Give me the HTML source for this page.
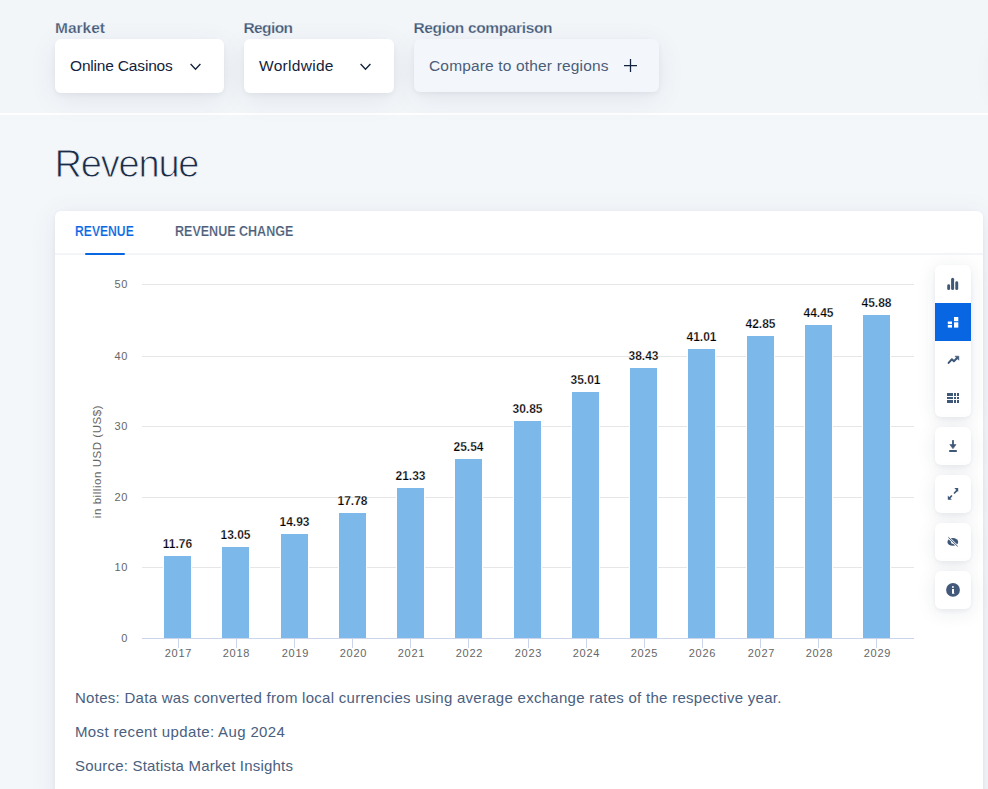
<!DOCTYPE html>
<html><head><meta charset="utf-8">
<style>
*{margin:0;padding:0;box-sizing:border-box}
html,body{width:988px;height:789px;overflow:hidden}
body{background:#f4f7fa;font-family:"Liberation Sans",sans-serif;position:relative}
.abs{position:absolute;white-space:nowrap}
.top{position:absolute;left:0;top:0;width:988px;height:113px;background:#f3f6f9}
.sep{position:absolute;left:0;top:113px;width:988px;height:2px;background:#ffffff}
.lbl{position:absolute;font-size:15.5px;font-weight:bold;color:#445a78;top:18.8px;white-space:nowrap;-webkit-text-stroke:0.25px #f3f6f9}
.dd{position:absolute;top:39px;height:54px;background:#fff;border-radius:6px;box-shadow:0 2px 5px rgba(20,40,80,.05),0 6px 28px rgba(20,40,80,.08)}
.dd span{position:absolute;left:15px;top:17.6px;font-size:15.5px;color:#13233b;white-space:nowrap}
.title{position:absolute;left:54.6px;top:142.8px;letter-spacing:-1.2px;font-size:38px;color:#1a2c47;font-weight:normal;-webkit-text-stroke:0.9px #f4f7fa}
.card{position:absolute;left:55px;top:211px;width:928px;height:600px;background:#fff;border-radius:6px;box-shadow:0 1px 4px rgba(20,40,80,.05),0 4px 28px rgba(20,40,80,.08)}
.tab{position:absolute;top:222px;font-size:15px;font-weight:bold;white-space:nowrap;transform-origin:0 0;-webkit-text-stroke:0.2px #ffffff}
.note{position:absolute;left:75px;font-size:15px;color:#4a607e;white-space:nowrap}
.tb{position:absolute;left:935px;width:36px;background:#fff;border-radius:6px;box-shadow:0 2px 4px rgba(20,40,80,.05),0 3px 20px rgba(20,40,80,.09)}
svg text{font-family:"Liberation Sans",sans-serif}
.yl{font-size:11px;fill:#666666;letter-spacing:0.6px}
.xl{font-size:11px;fill:#666666;letter-spacing:0.75px}
.dl{font-size:12px;font-weight:bold;fill:#000000;stroke:#ffffff;stroke-width:0.25px}
.yt{font-size:11.5px;fill:#666666;letter-spacing:0.55px}
</style></head><body>
<div class="top"></div>
<div class="sep"></div>

<div class="lbl" style="left:55px">Market</div>
<div class="lbl" style="left:243.5px;letter-spacing:-0.6px">Region</div>
<div class="lbl" style="left:413.5px;letter-spacing:-0.35px">Region comparison</div>

<div class="dd" style="left:55px;width:169px"><span style="letter-spacing:-0.18px">Online Casinos</span></div>
<svg class="abs" style="left:189px;top:62px" width="14" height="10" viewBox="0 0 14 10"><path d="M1.6 2 L6.5 7.2 L11.4 2" fill="none" stroke="#13233b" stroke-width="1.35"/></svg>
<div class="dd" style="left:244px;width:150px"><span style="letter-spacing:0.3px">Worldwide</span></div>
<svg class="abs" style="left:359px;top:62px" width="14" height="10" viewBox="0 0 14 10"><path d="M1.6 2 L6.5 7.2 L11.4 2" fill="none" stroke="#13233b" stroke-width="1.35"/></svg>
<div class="dd" style="left:414px;width:245px;height:53px;background:#f3f6fa"><span style="color:#4a5d79;letter-spacing:0.16px">Compare to other regions</span></div>
<svg class="abs" style="left:623px;top:58px" width="15" height="15" viewBox="0 0 15 15"><path d="M7.5 1 V14 M1 7.5 H14" fill="none" stroke="#13233b" stroke-width="1.25"/></svg>

<div class="dd" style="left:1000px;width:150px;height:53px;background:#f3f6fa"></div>
<div class="title">Revenue</div>

<div class="card"></div>
<div class="tab" style="left:75px;color:#0866e3;transform:scaleX(0.81)">REVENUE</div>
<div class="tab" style="left:175px;color:#4b5e79;transform:scaleX(0.835)">REVENUE CHANGE</div>
<div class="abs" style="left:55px;top:253px;width:928px;height:2px;background:#f3f5f8"></div>
<div class="abs" style="left:85px;top:253px;width:40px;height:2px;background:#0866e3;border-radius:1px"></div>

<svg class="abs" style="left:0;top:0" width="988" height="789">
<line x1="142" x2="914" y1="567.5" y2="567.5" stroke="#e6e6e6" stroke-width="1"/>
<line x1="142" x2="914" y1="497.5" y2="497.5" stroke="#e6e6e6" stroke-width="1"/>
<line x1="142" x2="914" y1="426.5" y2="426.5" stroke="#e6e6e6" stroke-width="1"/>
<line x1="142" x2="914" y1="356.5" y2="356.5" stroke="#e6e6e6" stroke-width="1"/>
<line x1="142" x2="914" y1="284.5" y2="284.5" stroke="#e6e6e6" stroke-width="1"/>
<text x="127.9" y="641.6" text-anchor="end" class="yl">0</text>
<text x="127.9" y="570.6" text-anchor="end" class="yl">10</text>
<text x="127.9" y="500.6" text-anchor="end" class="yl">20</text>
<text x="127.9" y="429.6" text-anchor="end" class="yl">30</text>
<text x="127.9" y="359.6" text-anchor="end" class="yl">40</text>
<text x="127.9" y="287.6" text-anchor="end" class="yl">50</text>
<rect x="163" y="555" width="29" height="83" fill="#ffffff"/>
<rect x="164" y="556" width="27" height="82" fill="#7cb8e9"/>
<text x="177.50" y="548.00" text-anchor="middle" class="dl">11.76</text>
<line x1="178.5" x2="178.5" y1="638" y2="648" stroke="#ccd6eb" stroke-width="1"/>
<text x="178.40" y="657" text-anchor="middle" class="xl">2017</text>
<rect x="221" y="546" width="29" height="92" fill="#ffffff"/>
<rect x="222" y="547" width="27" height="91" fill="#7cb8e9"/>
<text x="235.50" y="539.00" text-anchor="middle" class="dl">13.05</text>
<line x1="236.5" x2="236.5" y1="638" y2="648" stroke="#ccd6eb" stroke-width="1"/>
<text x="236.40" y="657" text-anchor="middle" class="xl">2018</text>
<rect x="280" y="533" width="29" height="105" fill="#ffffff"/>
<rect x="281" y="534" width="27" height="104" fill="#7cb8e9"/>
<text x="294.50" y="526.00" text-anchor="middle" class="dl">14.93</text>
<line x1="294.5" x2="294.5" y1="638" y2="648" stroke="#ccd6eb" stroke-width="1"/>
<text x="295.40" y="657" text-anchor="middle" class="xl">2019</text>
<rect x="338" y="512" width="29" height="126" fill="#ffffff"/>
<rect x="339" y="513" width="27" height="125" fill="#7cb8e9"/>
<text x="352.50" y="505.00" text-anchor="middle" class="dl">17.78</text>
<line x1="352.5" x2="352.5" y1="638" y2="648" stroke="#ccd6eb" stroke-width="1"/>
<text x="353.40" y="657" text-anchor="middle" class="xl">2020</text>
<rect x="396" y="487" width="29" height="151" fill="#ffffff"/>
<rect x="397" y="488" width="27" height="150" fill="#7cb8e9"/>
<text x="410.50" y="480.00" text-anchor="middle" class="dl">21.33</text>
<line x1="410.5" x2="410.5" y1="638" y2="648" stroke="#ccd6eb" stroke-width="1"/>
<text x="411.40" y="657" text-anchor="middle" class="xl">2021</text>
<rect x="454" y="458" width="29" height="180" fill="#ffffff"/>
<rect x="455" y="459" width="27" height="179" fill="#7cb8e9"/>
<text x="468.50" y="451.00" text-anchor="middle" class="dl">25.54</text>
<line x1="468.5" x2="468.5" y1="638" y2="648" stroke="#ccd6eb" stroke-width="1"/>
<text x="469.40" y="657" text-anchor="middle" class="xl">2022</text>
<rect x="513" y="420" width="29" height="218" fill="#ffffff"/>
<rect x="514" y="421" width="27" height="217" fill="#7cb8e9"/>
<text x="527.50" y="413.00" text-anchor="middle" class="dl">30.85</text>
<line x1="528.5" x2="528.5" y1="638" y2="648" stroke="#ccd6eb" stroke-width="1"/>
<text x="528.40" y="657" text-anchor="middle" class="xl">2023</text>
<rect x="571" y="391" width="29" height="247" fill="#ffffff"/>
<rect x="572" y="392" width="27" height="246" fill="#7cb8e9"/>
<text x="585.50" y="384.00" text-anchor="middle" class="dl">35.01</text>
<line x1="586.5" x2="586.5" y1="638" y2="648" stroke="#ccd6eb" stroke-width="1"/>
<text x="586.40" y="657" text-anchor="middle" class="xl">2024</text>
<rect x="629" y="367" width="29" height="271" fill="#ffffff"/>
<rect x="630" y="368" width="27" height="270" fill="#7cb8e9"/>
<text x="643.50" y="360.00" text-anchor="middle" class="dl">38.43</text>
<line x1="644.5" x2="644.5" y1="638" y2="648" stroke="#ccd6eb" stroke-width="1"/>
<text x="644.40" y="657" text-anchor="middle" class="xl">2025</text>
<rect x="687" y="348" width="29" height="290" fill="#ffffff"/>
<rect x="688" y="349" width="27" height="289" fill="#7cb8e9"/>
<text x="701.50" y="341.00" text-anchor="middle" class="dl">41.01</text>
<line x1="702.5" x2="702.5" y1="638" y2="648" stroke="#ccd6eb" stroke-width="1"/>
<text x="702.40" y="657" text-anchor="middle" class="xl">2026</text>
<rect x="746" y="335" width="29" height="303" fill="#ffffff"/>
<rect x="747" y="336" width="27" height="302" fill="#7cb8e9"/>
<text x="760.50" y="328.00" text-anchor="middle" class="dl">42.85</text>
<line x1="760.5" x2="760.5" y1="638" y2="648" stroke="#ccd6eb" stroke-width="1"/>
<text x="761.40" y="657" text-anchor="middle" class="xl">2027</text>
<rect x="804" y="324" width="29" height="314" fill="#ffffff"/>
<rect x="805" y="325" width="27" height="313" fill="#7cb8e9"/>
<text x="818.50" y="317.00" text-anchor="middle" class="dl">44.45</text>
<line x1="818.5" x2="818.5" y1="638" y2="648" stroke="#ccd6eb" stroke-width="1"/>
<text x="819.40" y="657" text-anchor="middle" class="xl">2028</text>
<rect x="862" y="314" width="29" height="324" fill="#ffffff"/>
<rect x="863" y="315" width="27" height="323" fill="#7cb8e9"/>
<text x="876.50" y="307.00" text-anchor="middle" class="dl">45.88</text>
<line x1="876.5" x2="876.5" y1="638" y2="648" stroke="#ccd6eb" stroke-width="1"/>
<text x="877.40" y="657" text-anchor="middle" class="xl">2029</text>
<line x1="142" x2="914" y1="638.5" y2="638.5" stroke="#ccd6eb" stroke-width="1"/>
<text transform="translate(101,461.5) rotate(-90)" text-anchor="middle" class="yt">in billion USD (US$)</text>
</svg>

<div class="note" style="top:689px;letter-spacing:0.28px">Notes: Data was converted from local currencies using average exchange rates of the respective year.</div>
<div class="note" style="top:723px;letter-spacing:0.36px">Most recent update: Aug 2024</div>
<div class="note" style="top:756.5px;letter-spacing:0.2px">Source: Statista Market Insights</div>

<div class="tb" style="top:265px;height:152px"></div>
<div class="abs" style="left:935px;top:303px;width:36px;height:38px;background:#0866e3"></div>
<div class="tb" style="top:427px;height:38px"></div>
<div class="tb" style="top:475px;height:38px"></div>
<div class="tb" style="top:523px;height:38px"></div>
<div class="tb" style="top:571px;height:38px"></div>

<svg class="abs" style="left:935px;top:265px" width="36" height="38" viewBox="0 0 36 38">
 <g fill="#3f5878"><rect x="12.2" y="19.2" width="2.9" height="5.9" rx="1.45"/><rect x="16.1" y="12.8" width="3" height="12.3" rx="1.5"/><rect x="20.3" y="16.2" width="2.9" height="8.9" rx="1.45"/></g>
</svg>
<svg class="abs" style="left:935px;top:303px" width="36" height="38" viewBox="0 0 36 38">
 <g fill="#ffffff"><rect x="19" y="14" width="4.3" height="4.2"/><rect x="19" y="19.3" width="4.3" height="5.3"/><rect x="12.8" y="18.5" width="4.2" height="2.6"/><rect x="12.8" y="22" width="4.2" height="2.6"/></g>
</svg>
<svg class="abs" style="left:935px;top:341px" width="36" height="38" viewBox="0 0 36 38">
 <path d="M13.6 21.9 L16.9 18.3 L18.9 20.2 L21.8 17.3" fill="none" stroke="#3f5878" stroke-width="2" stroke-linecap="round" stroke-linejoin="round"/>
 <path d="M20 15.2 L23.8 15.2 L23.8 19.2 Z" fill="#3f5878" stroke="#3f5878" stroke-width="0.6" stroke-linejoin="round"/>
</svg>
<svg class="abs" style="left:935px;top:379px" width="36" height="38" viewBox="0 0 36 38">
 <g fill="#3f5878"><rect x="12" y="14" width="6" height="3"/><rect x="12" y="18" width="6" height="2"/><rect x="12" y="21" width="6" height="3"/>
 <rect x="19" y="14" width="2" height="3"/><rect x="19" y="18" width="2" height="2"/><rect x="19" y="21" width="2" height="3"/>
 <rect x="22" y="14" width="2" height="3"/><rect x="22" y="18" width="2" height="2"/><rect x="22" y="21" width="2" height="3"/></g>
</svg>
<svg class="abs" style="left:935px;top:427px" width="36" height="38" viewBox="0 0 36 38">
 <g fill="#3f5878"><rect x="17.1" y="13" width="1.8" height="6" rx="0.6"/><path d="M14.8 17.6 L21 17.6 L18 21.7 Z" stroke="#3f5878" stroke-width="0.6" stroke-linejoin="round"/><rect x="14.1" y="23.1" width="7.8" height="1.8" rx="0.4"/></g>
</svg>
<svg class="abs" style="left:935px;top:475px" width="36" height="38" viewBox="0 0 36 38">
 <g fill="#3f5878"><path d="M19.3 13.1 L23.2 13.1 L23.2 17.1 Z"/><path d="M12.8 20.6 L12.8 24.7 L16.8 24.7 Z"/></g>
 <path d="M14.2 23.3 L16.5 21 M19.5 18 L21.8 15.7" stroke="#3f5878" stroke-width="1.7" stroke-linecap="round"/>
</svg>
<svg class="abs" style="left:935px;top:523px" width="36" height="38" viewBox="0 0 36 38">
 <ellipse cx="17.8" cy="18.9" rx="5.4" ry="3.9" fill="#3f5878"/>
 <circle cx="17.5" cy="19.4" r="1.3" fill="#ffffff"/>
 <path d="M13.6 14.6 L22.5 23.2" stroke="#ffffff" stroke-width="2.2"/>
 <path d="M13.4 14.3 L22.7 23.4" stroke="#3f5878" stroke-width="1"/>
</svg>
<svg class="abs" style="left:935px;top:571px" width="36" height="38" viewBox="0 0 36 38">
 <circle cx="18" cy="18.9" r="6.9" fill="#43597a"/>
 <path d="M17 17.9 L19 17.9 L19 21.8 L19.7 22.7 L17 22.7 Z" fill="#fff"/><circle cx="17.9" cy="16" r="0.95" fill="#fff"/>
</svg>

</body></html>
